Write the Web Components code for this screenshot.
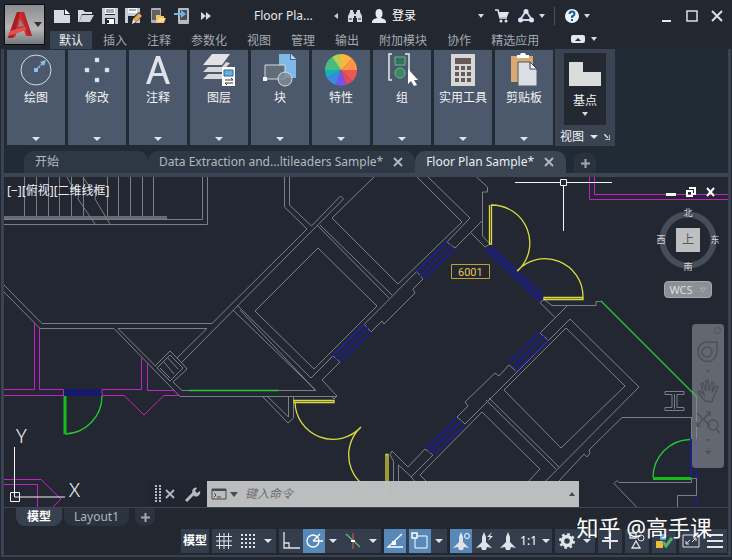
<!DOCTYPE html>
<html lang="zh-CN">
<head>
<meta charset="utf-8">
<title>Floor Plan Sample</title>
<style>
  body { margin: 0; background: #222730; font: 12px/18px "Noto Sans", "Noto Sans CJK SC", sans-serif; color: #d5d9df; }
</style>
</head>
<body>
<cad-app></cad-app>
<script>
const base = `<style>
  *, *::before { box-sizing: border-box; }
  button { font: inherit; color: inherit; background: none; border: 0; padding: 0; margin: 0; display: flex; align-items: center; justify-content: center; white-space: nowrap; }
  svg { display: block; }
</style>`;

function define(name, html, setup) {
  const template = document.createElement('template');
  template.innerHTML = base + html;
  customElements.define(name, class extends HTMLElement {
    connectedCallback() {
      if (this.shadowRoot) return;
      this.attachShadow({ mode: 'open' }).append(template.content.cloneNode(true));
      if (setup) setup(this, this.shadowRoot);
    }
  });
}

const scaleA = '<path d="M9 0l2 5v5l6 6-5-1-1 3H7l-1-3-5 1 6-6V5z" fill="#dfe3e8"/>';
const icons = {
  logo: [24, 28, '<path d="M9 1h7l8 24h-6l-2-6-7 2-2 5H0z" fill="#cf2e2e"/><path d="M9 1h3L8 17l-3 10H0z" fill="#a81c22"/><path d="M12 8l4 7-6 1z" fill="#8d8387"/><path d="M2 20l17-5 2 3-20 7z" fill="#e2504c"/><path d="M16 1l8 24h-4L13 1z" fill="#b8252a"/>'],
  new: [18, 14, '<path d="M1 1h10v5h6v8H1z" fill="#d6dae2"/><path d="M12 0l5 5h-5z" fill="#fff"/>'],
  open: [18, 14, '<path d="M1 13V1h5l2 2h7v2H5L2 13z" fill="#d6dae2"/><path d="M5 6h12l-4 7H2z" fill="#cbd0da"/>'],
  save: [16, 16, '<path d="M0 0h16v16H0z" fill="#c8ccd6"/><path d="M3 0h10v6H3z" fill="#f4f5f7"/><path d="M4 2h8M4 4h8" stroke="#59616f"/><path d="M3 6.500h10" stroke="#222730"/><path d="M3 10h10v6H3z" fill="#222730"/><path d="M5 11h7v5H5z" fill="#fff"/><path d="M5 12h2v3H5z" fill="#222730"/>'],
  saveas: [18, 16, '<path d="M0 0h15v15H0z" fill="#c8ccd6"/><path d="M3 0h9v5H3z" fill="#f4f5f7"/><path d="M4 2h7" stroke="#59616f"/><path d="M3 8h8v7H3z" fill="#222730"/><path d="M6 15l1-5 7-6 4 4-7 6z" fill="#222730"/><path d="M8 11l6-6 3 3-6 6z" fill="#eaa357"/><path d="M8 11l3 3-4 2z" fill="#fff2d5"/>'],
  mobileopen: [16, 16, '<rect x="1" width="10" height="15" rx="1" fill="#a9adb6"/><path d="M2 2h8v10H2z" fill="#60626a"/><path d="M6 15V7h4l1 1h3v2h2l-2 5z" fill="#f2c169"/><path d="M7 14l2-4h6l-2 4z" fill="#ffdd91"/>'],
  mobilesave: [16, 16, '<rect x="4" width="11" height="16" rx="1" fill="#b6bac3"/><path d="M6 2h7v10H6z" fill="#4a4d56"/><path d="M0 5h7V2l5 4-5 4V7H0z" fill="#6fb5ea"/>'],
  more: [10, 8, '<path d="M0 0l5 4-5 4zM5 0l5 4-5 4z" fill="#d6dae2"/>'],
  left: [4, 6, '<path d="M4 0v6L0 3z" fill="#c9cdd6"/>'],
  down: [6, 4, '<path d="M0 0h6L3 4z" fill="#d6dae2"/>'],
  bigdown: [8, 4, '<path d="M0 0h8L4 4z" fill="#dfe4ea"/>'],
  up: [6, 4, '<path d="M0 4h6L3 0z" fill="#4a4b4e"/>'],
  darkdown: [8, 5, '<path d="M0 0h8L4 5z" fill="#4a4b4e"/>'],
  logodown: [8, 5, '<path d="M0 0h8L4 5z" fill="#30323a"/>'],
  binoculars: [14, 14, '<path d="M2 1h3v2h1v6H5v4H0V7l2-4zM9 1h3v2l2 4v6H9V9H8V3h1z" fill="#d6dae2"/><path d="M5 5h4v2H5z" fill="#d6dae2"/><path d="M1 10h3M10 10h3" stroke="#222730"/>'],
  person: [14, 14, '<ellipse cx="7" cy="4.500" rx="3.500" ry="4.500" fill="#e8eaf0"/><path d="M5 7h4v2q5 1 5 4v1H0v-1q0-3 5-4z" fill="#e8eaf0"/>'],
  cart: [15, 14, '<path d="M0 1h3l2 8h7" fill="none" stroke="#e2e5f0" stroke-width="1.500"/><path d="M4 3h10l-2 5H5z" fill="#e2e5f0"/><circle cx="6" cy="12" r="1.500" fill="#e2e5f0"/><circle cx="11" cy="12" r="1.500" fill="#e2e5f0"/>'],
  network: [16, 14, '<path d="M8 2l6 9H2z" fill="none" stroke="#cdd3ef" stroke-width="2"/><circle cx="8" cy="2.500" r="2.500" fill="#dde1f5"/><circle cx="2.500" cy="11" r="2.500" fill="#dde1f5"/><circle cx="13.500" cy="11" r="2.500" fill="#dde1f5"/>'],
  help: [14, 14, '<circle cx="7" cy="7" r="7" fill="#eef3f8"/><path d="M4.500 5q0-2.500 2.500-2.500T9.500 5Q9.500 6.500 7 7.500V9" fill="none" stroke="#1f5c93" stroke-width="2"/><path d="M6 10h2v2H6z" fill="#1f5c93"/>'],
  min: [9, 12, '<path d="M0 10h9v2H0z" fill="#e6e8ec"/>'],
  max: [12, 12, '<path d="M1 1h10v10H1z" fill="none" stroke="#dcdfe5" stroke-width="1.500"/>'],
  close: [12, 12, '<path d="M1 1l10 10M11 1L1 11" stroke="#dcdfe5" stroke-width="2"/>'],
  tabclose: [10, 10, '<path d="M1 1l8 8M9 1L1 9" stroke="#b0b5bd" stroke-width="2"/>'],
  plus: [9, 9, '<path d="M4.500 0v9M0 4.500h9" stroke="#a3a9b2" stroke-width="2"/>'],
  ribbonmode: [14, 8, '<rect width="14" height="8" rx="2" fill="#e4e6ea"/><path d="M4 6l3-3 3 3z" fill="#2a2f39"/>'],
  draw: [32, 32, '<circle cx="16" cy="16" r="15" fill="none" stroke="#d3dbe6"/><path d="M14 14h4v4h-4z" fill="#86c2ee"/><path d="M18 14l6-6" stroke="#86c2ee" stroke-width="1.500" stroke-dasharray="3 1"/><path d="M26 6l-2 6-4-4z" fill="#86c2ee"/>'],
  modify: [32, 32, '<g fill="#e4e7ec" stroke="#a7c4de" stroke-width=".5"><path d="M14 4h4v4h-4zM4 14h4v4H4zM24 14h4v4h-4zM14 24h4v4h-4z"/></g>'],
  annotate: [32, 32, '<path d="M4 30L14 2h4l10 28h-4l-3-8H11l-3 8zM12 19h8L16 7z" fill="#dfe2e6"/>'],
  layers: [34, 34, '<path d="M10 1h18L20 12H1z" fill="#e2e2e2"/><path d="M6 14h14l4-5 4 1-8 9H1zM6 21h14v5H1z" fill="#d5d7d9"/><path d="M20 14h13v19H20z" fill="#fff"/><path d="M22 17h9v6h-9z" fill="#6ab0e4" stroke="#286491"/><path d="M23 27h8m-2-2 2 2M31 30h-8m2 2-2-2" fill="none" stroke="#333"/>'],
  block: [34, 34, '<path d="M16 1h11l6 6v18H16z" fill="#7eb9e7"/><path d="M27 1v6h6z" fill="#36658d"/><path d="M28 1l5 5h-5z" fill="#b8ddf9"/><path d="M2 12h20v14H2z" fill="#606d7b" stroke="#d9dce1"/><circle cx="22" cy="26" r="7" fill="#7f8a96" fill-opacity=".85" stroke="#d9dce1"/><path d="M0 24h4v4H0z" fill="#f4f4f4"/>'],
  properties: [32, 32, '<path d="M16 16V0A16 16 0 0 1 27.300 4.700z" fill="#ffb53d"/><path d="M16 16L27.300 4.700A16 16 0 0 1 32 16z" fill="#ff9347"/><path d="M16 16h16a16 16 0 0 1-4.700 11.300z" fill="#ed5655"/><path d="M16 16l11.300 11.300A16 16 0 0 1 21 31z" fill="#dc4a59"/><path d="M16 16l5 15a16 16 0 0 1-10 0z" fill="#7751ef"/><path d="M16 16l-5 15A16 16 0 0 1 2 24z" fill="#3d89dd"/><path d="M16 16L2 24a16 16 0 0 1-2-8z" fill="#17aebd"/><path d="M16 16H0A16 16 0 0 1 7 3z" fill="#48bc7f"/><path d="M16 16L7 3a16 16 0 0 1 9-3z" fill="#b9cf58"/>'],
  group: [34, 34, '<path d="M7 1H4v26h3M20 1h4v19" fill="none" stroke="#e7eaee" stroke-width="1.500"/><path d="M10 4h10v8H10z" fill="#347158" stroke="#65bd8b"/><circle cx="15" cy="20" r="5" fill="#3f8465" stroke="#65bd8b"/><path d="M23 16v15l3-3 3 5 3-1-3-5h4z" fill="#fff"/>'],
  calc: [32, 32, '<path d="M4 0h24v32H4z" fill="#d8d7d6"/><path d="M8 4h16v6H8zM8 12h4v4H8zm6 0h4v4h-4zm6 0h4v4h-4zM8 18h4v4H8zm6 0h4v4h-4zm6 0h4v4h-4zM8 24h4v4H8zm6 0h4v4h-4zm6 0h4v4h-4z" fill="#655b59"/>'],
  clipboard: [32, 34, '<path d="M3 3h22v26H3z" fill="#d8aa70"/><path d="M9 2h3l1-2h4l1 2h3v3H9z" fill="#fff"/><path d="M10 9h12l7 7v17H10z" fill="#dbdfe4" stroke="#4e596a"/><path d="M22 9v7h7z" fill="#fff" stroke="#2d3c55"/>'],
  base: [32, 24, '<path d="M0 0h14v10h18v14H0z" fill="#dbdbdb"/>'],
  launch: [6, 6, '<path d="M0 0l4 4M6 1v5H1" fill="none" stroke="#d6dae2" stroke-width="1.500"/>'],
  restore: [10, 10, '<path d="M1 4h5v5H1zM3 1h6v6H7" fill="none" stroke="#fff" stroke-width="2"/>'],
  mdimin: [10, 10, '<path d="M0 6h10v3H0z" fill="#fff"/>'],
  mdiclose: [10, 10, '<path d="M1 1l7 8M8 1L1 9" stroke="#fff" stroke-width="2"/>'],
  grip: [6, 18, '<path d="M1 0v18M5 0v18" stroke="#b6bac0" stroke-width="2" stroke-dasharray="2 1"/>'],
  wrench: [16, 16, '<path d="M1 15l8-8" stroke="#b7bbc1" stroke-width="3"/><path d="M8 8q-2-4 1-6 2-1 3 0l-2 3 2 2 3-2q1 3-2 5-2 1-4 0z" fill="#b7bbc1"/>'],
  prompt: [16, 12, '<path d="M1 1h14v10H1z" fill="none" stroke="#48494c"/><path d="M1 2h14" stroke="#48494c" stroke-width="2"/><path d="M3 5l2 2-2 2M6 9h4" fill="none" stroke="#48494c"/>'],
  wheel: [24, 24, '<circle cx="11" cy="12" r="5"/><path d="M2 12a9 9 0 0 1 9-10h10v10a9 9 0 0 1-19 0z"/>', '#4d5158'],
  hand: [22, 24, '<path d="M8 22q-3-3-7-9l2-1 4 4L4 5l2-1 3 8V2l2-1 1 11 3-9 2 1-2 9 4-6 2 1-4 9-2 6z"/>', '#4d5158'],
  zoomer: [24, 24, '<path d="M1 17L14 3M1 4l13 13M10 3h4v4M1 13v4h4"/><circle cx="17" cy="16" r="5"/><path d="M20 20l4 4"/>', '#4d5158'],
  grid: [16, 16, '<path d="M3.500 0v16M8 0v16M12.500 0v16M0 3.500h16M0 8h16M0 12.500h16" stroke="#dfe3e8"/>'],
  dots: [14, 14, '<path d="M0 1h14M0 5h14M0 9h14M0 13h14" stroke="#dfe3e8" stroke-width="2" stroke-dasharray="2 2"/>'],
  ortho: [18, 18, '<path d="M2 0v16h16M2 11h5v5" fill="none" stroke="#dfe3e8" stroke-width="1.300"/>'],
  polar: [18, 18, '<circle cx="8" cy="9" r="6" fill="none" stroke="#fff" stroke-width="1.300"/><path d="M8 9h10M8 9l7-7" stroke="#fff" stroke-width="1.300"/>'],
  iso: [16, 16, '<path d="M1 1l14 13" stroke="#5fb273" stroke-width="1.500"/><path d="M8 0v16" stroke="#d66161"/><path d="M6 8h4" stroke="#fff" stroke-width="2"/>'],
  angle: [18, 16, '<path d="M16 1L2 14h15" fill="none" stroke="#fff" stroke-width="1.300"/><path d="M6 8h4v4H6z" fill="#fff"/>'],
  snap: [18, 18, '<path d="M4 4h12v12H4z" fill="none" stroke="#fff"/><path d="M1 1h5v5H1z" fill="#5788b8" stroke="#fff" stroke-width="1.500"/>'],
  annovis: [18, 18, scaleA + '<circle cx="15" cy="4" r="2.500" fill="none" stroke="#fff"/>'],
  annoauto: [18, 18, scaleA + '<path d="M17 0l-5 5h3l-2 4 5-5h-3z" fill="#dfe3e8"/>'],
  anno: [18, 18, scaleA],
  gear: [16, 16, '<circle cx="8" cy="8" r="4.500" fill="none" stroke="#e2e5e9" stroke-width="3.500"/><circle cx="8" cy="8" r="7" fill="none" stroke="#e2e5e9" stroke-width="2" stroke-dasharray="2.750"/>'],
  bigplus: [16, 16, '<path d="M8 0v16M0 8h16" stroke="#dfe3e8" stroke-width="2"/>'],
  shapes: [16, 18, '<path d="M1 1h6v5H1zM7 9l4 7H3z" fill="none" stroke="#dfe3e8" stroke-width="1.300"/><circle cx="12" cy="6" r="3" fill="none" stroke="#dfe3e8"/>'],
  hardware: [18, 16, '<path d="M5 1h6v6H5z" fill="#59a6d9"/><path d="M1 8h7v7H1z" fill="#edbc3c"/><path d="M8 9l3 4 6-8" fill="none" stroke="#53b16a" stroke-width="3"/>'],
  full: [18, 14, '<path d="M1 1h16v12H1z" fill="none" stroke="#dfe3e8"/><path d="M4 7v3h3M4 10l4-4M14 7V4h-3M14 4l-4 4" fill="none" stroke="#dfe3e8"/>'],
  menu: [16, 14, '<path d="M0 1h16M0 7h16M0 13h16" stroke="#e2e5e9" stroke-width="2"/>']
};

define('cad-icon', `<style>:host { display: block; flex: none; }</style><span></span>`, (el, root) => {
  const [w, h, body, stroke] = icons[el.getAttribute('name')];
  root.querySelector('span').innerHTML = `<svg width="${w}" height="${h}" viewBox="0 0 ${w} ${h}" aria-hidden="true"${stroke ? ` fill="none" stroke="${stroke}" stroke-width="1.500"` : ''}>${body}</svg>`;
});

define('cad-title-bar', `<style>
  :host { display: flex; align-items: center; height: 31px; color: #e6e8ec; }
  .tools { display: flex; }
  .tools button { width: 24px; height: 24px; }
  .title { margin-left: 36px; width: 64px; }
  .arrow { width: 16px; height: 20px; margin-left: 10px; }
  .find { margin-left: 4px; width: 14px; height: 20px; }
  .login { margin-left: 10px; gap: 6px; color: #fff; }
  .push { margin-left: auto; }
  .cart { margin-left: 6px; }
  .net { margin-left: 8px; }
  .flush { margin-left: 0; }
  .help { border-left: 1px solid #4a5160; padding-left: 10px; margin-left: 4px; height: 18px; }
  .window { display: flex; margin-left: 59px; }
  .window button { width: 25px; height: 24px; }
</style>
<div class="tools">
  <button aria-label="新建"><cad-icon name="new"></cad-icon></button>
  <button aria-label="打开"><cad-icon name="open"></cad-icon></button>
  <button aria-label="保存"><cad-icon name="save"></cad-icon></button>
  <button aria-label="另存为"><cad-icon name="saveas"></cad-icon></button>
  <button aria-label="从移动设备打开"><cad-icon name="mobileopen"></cad-icon></button>
  <button aria-label="保存到移动设备"><cad-icon name="mobilesave"></cad-icon></button>
  <button aria-label="更多"><cad-icon name="more"></cad-icon></button>
</div>
<span class="title">Floor Pla...</span>
<button class="arrow" aria-label="收起搜索"><cad-icon name="left"></cad-icon></button>
<button class="find" aria-label="搜索"><cad-icon name="binoculars"></cad-icon></button>
<button class="login"><cad-icon name="person"></cad-icon>登录</button>
<button class="arrow push" aria-label="账户"><cad-icon name="down"></cad-icon></button>
<button class="cart" aria-label="应用商店"><cad-icon name="cart"></cad-icon></button>
<button class="net" aria-label="连接"><cad-icon name="network"></cad-icon></button>
<button class="arrow flush" aria-label="连接选项"><cad-icon name="down"></cad-icon></button>
<button class="help" aria-label="帮助"><cad-icon name="help"></cad-icon></button>
<button class="arrow flush" aria-label="帮助选项"><cad-icon name="down"></cad-icon></button>
<div class="window">
  <button aria-label="最小化"><cad-icon name="min"></cad-icon></button>
  <button aria-label="最大化"><cad-icon name="max"></cad-icon></button>
  <button aria-label="关闭"><cad-icon name="close"></cad-icon></button>
</div>`);

define('cad-menu-tabs', `<style>
  :host { display: flex; gap: 2px; height: 18px; color: #a4a9b2; }
  button { padding: 1px 9px 0; height: 18px; }
  .on { background: #3a4351; color: #f0f2f5; }
  .mode { padding: 0 0 2px; gap: 6px; margin-left: 21px; }
</style>
<button class="on">默认</button><button>插入</button><button>注释</button><button>参数化</button><button>视图</button><button>管理</button><button>输出</button><button>附加模块</button><button>协作</button><button>精选应用</button>
<button class="mode" aria-label="功能区模式"><cad-icon name="ribbonmode"></cad-icon><cad-icon name="down"></cad-icon></button>`);

define('cad-header', `<style>
  :host { display: grid; grid-template-columns: 50px 1fr; padding-right: 3px; background: #222730; }
  .logo { grid-row: span 2; align-self: start; justify-self: start; width: 41px; height: 41px; margin: 4px; border: 1px solid #0c0e12; background: linear-gradient(#8d8d90, #b7b7b9 60%, #77787b); gap: 2px; }
</style>
<button class="logo" aria-label="应用程序菜单"><cad-icon name="logo"></cad-icon><cad-icon name="logodown"></cad-icon></button>
<cad-title-bar></cad-title-bar><cad-menu-tabs></cad-menu-tabs>`);

define('cad-panel', `<style>
  :host { display: block; flex: 0 1 58px; }
  button { width: 100%; height: 95px; padding: 2px 0 4px; background: #4c586b; flex-direction: column; justify-content: flex-start; color: #f1f3f6; }
  .art { display: flex; align-items: center; justify-content: center; height: 36px; margin-bottom: 1px; }
  .foot { margin-top: auto; }
</style>
<button><span class="art"></span><slot></slot><cad-icon class="foot" name="bigdown"></cad-icon></button>`, (el, root) => {
  const art = document.createElement('cad-icon');
  art.setAttribute('name', el.getAttribute('icon'));
  root.querySelector('.art').append(art);
});

define('cad-view-panel', `<style>
  :host { display: flex; flex-direction: column; align-items: center; width: 60px; height: 97px; background: #3a4351; color: #f1f3f6; margin: -1px 0 -1px -1px; }
  .base { width: 42px; height: 72px; margin-top: 4px; background: #242831; flex-direction: column; }
  .base span { margin: 6px 0 2px; }
  .foot { width: 100%; display: flex; padding: 3px 5px 0; align-items: center; justify-content: space-between; }
</style>
<button class="base"><cad-icon name="base"></cad-icon><span>基点</span><cad-icon name="down"></cad-icon></button>
<div class="foot"><span>视图</span><cad-icon name="bigdown"></cad-icon><button aria-label="视图设置"><cad-icon name="launch"></cad-icon></button></div>`);

define('cad-ribbon', `<style>
  :host { display: flex; gap: 3px; padding: 1px 3px 6px; background: #202b36; }
</style>
<cad-panel icon="draw">绘图</cad-panel><cad-panel icon="modify">修改</cad-panel><cad-panel icon="annotate">注释</cad-panel><cad-panel icon="layers">图层</cad-panel><cad-panel icon="block">块</cad-panel><cad-panel icon="properties">特性</cad-panel><cad-panel icon="group">组</cad-panel><cad-panel icon="calc">实用工具</cad-panel><cad-panel icon="clipboard">剪贴板</cad-panel><cad-view-panel></cad-view-panel>`);

define('cad-file-tab', `<style>
  :host { display: flex; align-items: center; gap: 10px; height: 22px; padding: 0 12px 0 11px; background: #2d3844; border-radius: 10px 10px 0 0; color: #b4b9c1; }
  :host([active]) { background: #3b4553; color: #eceef1; }
  :host([wide]) { width: 124px; }
  :host([wide]) .x { display: none; }
</style><button><slot></slot></button><button class="x" aria-label="关闭标签"><cad-icon name="tabclose"></cad-icon></button>`);

define('cad-file-tabs', `<style>
  :host { display: flex; padding-left: 20px; height: 26px; background: #202b36; border-bottom: 4px solid #3b4553; }
  .add { width: 22px; height: 20px; align-self: end; margin-left: 8px; background: #2a323d; border-radius: 8px 8px 0 0; }
</style>
<cad-file-tab wide>开始</cad-file-tab><cad-file-tab>Data Extraction and...ltileaders Sample*</cad-file-tab><cad-file-tab active>Floor Plan Sample*</cad-file-tab>
<button class="add" aria-label="新图形"><cad-icon name="plus"></cad-icon></button>`);

define('cad-floor-plan', `<style>
  :host { display: block; position: absolute; inset: 0; overflow: hidden; }
  svg { width: 100%; height: 100%; fill: none; }
  text { stroke: none; }
</style>
<svg viewBox="4 177 724 331" preserveAspectRatio="xMinYMin slice">
  <g stroke="#7b8088">
    <path d="M24.500 177v39M36.500 177v39M48.500 177v39M59.500 177v39M71.500 177v39M83.500 177v39M107.500 177v39M118.500 177v39M130.500 177v39M142.500 177v39M153.500 177v39M83.500 208v8"/>
    <path d="M4 217.500H167" stroke-width="3" stroke="#666b74"/>
    <path d="M4 219.500H202.500V177M4 224.500H207.500V177M67 177l7 13 5 0-1 9 17 25M83 177l8 12 5 2-1 8 15 25"/>
    <path d="M4 285l38 38.500H212L307 229 284.500 207V177M4 292l36 36.500H114L180 396.500H336M118 328.500H207L177 358M118 328.500l38 38"/>
    <path d="M289.500 177v28l22 21 29-30 3 3L182 362M155 366l15-15 7 7 5 5 5 6-14 13 9 8.500H316L233 310"/>
    <path d="M157 368l13-13 13 13-13 13zM160 368l10 10M164 362l10 12M168 358l10 11"/>
    <path d="M316 391l-76-81M237 305l74 73 22-22 7 6-18 18 15 16-3 3-3-3"/>
    <path d="M318 248l-63 63 59 58 63-63zM317 225l72 73M320 225l72 70"/>
    <path d="M311 378L447 241M364 324l7 8 11-11 2 3 31-31-2-4 10-10-6-7"/>
    <path d="M374 177l-42 41 66 66 64-62-45-45M428 177l42 41-23 24 8 6 27-27M470 232l15 15 5-3-7.500-8V192h5v-5l-11-10"/>
    <path d="M262 396l26 27 5.500-5v-22M267 396l21.500 21v-21"/>
    <path d="M601 301.500h-5v4H552l-8-6-4 3 15 15M567 306l-27 27 8 7M570 319L465 424l-8-7 11-11-3-4 30-29 4 3 10-11 7 6M570 319l69 68L519 508M566 328l-62 62 57 58 64-62z"/>
    <path d="M489 398l70 69M486 400l70 69M504 508l36-39-58-57-62 63 33 33M691.500 417V440M691 417.500H622L589 450l1 3-3 4-3-3-50 54M696.500 396v43M691 478.500h5.500v17H677.500V508M691.500 478v4.500H619l-2-2-3 3 24 25"/>
    <path d="M390 455l2-4 16 16 17-18 8 6-22 22 29 31M390 455l3.500 6v47M398.500 508V465l13 12M388 495.500h-16l-5 5 11 8"/>
    <path d="M665 391.500h19v3h-7v13h7v3h-19v-3h7v-13h-7zM674.500 394v15"/>
  </g>
  <g stroke="#1c1f86" stroke-width="2">
    <path d="M447 241l-30 31M451 245l-31 31M455 249l-32 30M364 324l-32 32M371 332l-31 30M368 327l-33 33M540 332l-31 31M544 336l-31 31M548 340l-32 31M457 418l-31 30M461 421l-32 31M465 425l-32 30M486 250l54 52M489 248l53 52M491 246l54 51M691 439v39M696.500 439v39M696.500 496v12"/>
    <path d="M64 392.500H102" stroke-width="7" stroke="#171a6c"/>
  </g>
  <g stroke="#c322c6">
    <path d="M589.500 177v22.500H728M594.500 177v17.500H728M34.500 322v67.500H4M39.500 328v61.500H63.500v6M4 395.500H64M102 395.500v-6H141.500V358M147.500 363v27.500H174M102 395.500h22l20 19.500 20-19.500h16M4 479.500H41l20 19.500-9 9M4 484.500H37.500V508"/>
  </g>
  <g stroke="#25c936">
    <path d="M189 390.500h89M601 301l96 96M102 396a38 38 0 0 1-37 38M690 439.500a38 38 0 0 0-37 38" stroke-width="1.300"/>
    <path d="M65 396v38M653 478.500h38" stroke-width="3" stroke="#15bd15"/>
  </g>
  <g stroke="#dada43">
    <path d="M489.500 205v39h2v-39a38 38 0 0 1 26 66M517 271a38 38 0 0 1 66 26M544 299.500h39v-2h-39zM294 400.500h40v2h-40zM295 402a38 38 0 0 0 66 25M361 427a38 38 0 0 0 26 66M386 454.500v39h2v-39z" stroke-width="1.300"/>
    <path d="M451.500 264.500h38v14h-38z" stroke="#c4a02f"/>
    <text x="458" y="276" fill="#e9c654" font-family="Liberation Sans Narrow, Roboto, sans-serif" font-size="11">6001</text>
  </g>
  <g stroke="#f4f5f7" fill="none">
    <path d="M515 182.500h45M567 182.500h45M563.500 186v45M560.500 179.500h6v6h-6z"/>
    <path d="M14.500 447v50H65M10.500 492.500h9v9h-9z"/>
    <g fill="#f4f5f7" font-family="Noto Sans, sans-serif" font-weight="300" font-size="20"><text x="16" y="443">Y</text><text x="69" y="497">X</text></g>
  </g>
</svg>`);

define('cad-view-cube', `<style>
  :host { display: grid; justify-items: center; gap: 8px; width: 64px; font-size: 9px; line-height: 12px; color: #d7d9dd; }
  .ring { display: grid; grid-template: 12px 1fr 12px / 12px 1fr 12px; place-items: center; width: 66px; height: 66px; background: radial-gradient(circle, transparent 22px, #474d58 23px, #474d58 28px, transparent 29px); }
  .ring span:first-child, .s { grid-column: 1 / -1; }
  .top { width: 24px; height: 24px; background: #bdbfc1; color: #55585c; font-size: 12px; }
  .wcs { width: 48px; height: 17px; border-radius: 4px; border: 1px solid #a4a8ad; background: #8b9096; color: #dcdee1; font-size: 11px; gap: 6px; }
</style>
<div class="ring"><span>北</span><span>西</span><button class="top">上</button><span>东</span><span class="s">南</span></div>
<button class="wcs">WCS <svg width="8" height="6" fill="none" stroke="#a9adb2"><path d="M1 1h6L4 5z"/></svg></button>`);

define('cad-nav-bar', `<style>
  :host { display: flex; flex-direction: column; align-items: center; width: 32px; height: 144px; padding: 3px 0; gap: 6px; border-radius: 4px; background: rgba(135,139,145,.65); }
  .c { align-self: end; margin-right: 3px; }
</style>
<svg class="c" width="7" height="7" fill="none" stroke="#4d5158"><circle cx="3.500" cy="3.500" r="3"/></svg>
<button aria-label="导航轮"><cad-icon name="wheel"></cad-icon></button>
<svg width="4" height="3"><path d="M0 0h4L2 3z" fill="#4d5158"/></svg>
<button aria-label="平移"><cad-icon name="hand"></cad-icon></button>
<button aria-label="缩放"><cad-icon name="zoomer"></cad-icon></button>
<svg width="4" height="3"><path d="M0 0h4L2 3z" fill="#4d5158"/></svg>
<svg width="5" height="6"><path d="M0 0h5M0 3h5L2 6z" stroke="#4d5158" fill="#4d5158"/></svg>`);

define('cad-command-line', `<style>
  :host { display: flex; align-items: center; height: 26px; background: rgba(32,38,47,.85); padding-left: 5px; gap: 4px; }
  .x { width: 10px; }
  .tool { width: 20px; height: 20px; margin-left: 4px; }
  .bar { flex: 1; display: flex; align-items: center; align-self: stretch; gap: 4px; padding: 0 4px; background: rgba(214,214,214,.86); }
  .recent { gap: 3px; }
  input { flex: 1; min-width: 0; border: 0; padding: 0; margin-left: 3px; background: none; font: inherit; font-style: italic; outline: 0; }
  input::placeholder { color: #6b6c6e; opacity: 1; }
</style>
<cad-icon name="grip"></cad-icon>
<button class="x" aria-label="关闭命令行"><cad-icon name="tabclose"></cad-icon></button>
<button class="tool" aria-label="自定义"><cad-icon name="wrench"></cad-icon></button>
<div class="bar"><button class="recent" aria-label="最近使用的命令"><cad-icon name="prompt"></cad-icon><cad-icon name="darkdown"></cad-icon></button>
<input aria-label="命令" placeholder="键入命令"><button aria-label="历史记录"><cad-icon name="up"></cad-icon></button></div>`);

define('cad-viewport', `<style>
  :host { display: block; position: relative; flex: 1; min-height: 240px; background: #222731; border-bottom: 1px solid #3e4550; }
  .labels { position: absolute; left: 3px; top: 5px; display: flex; color: #eef0f3; }
  .mdi { position: absolute; right: 12px; top: 10px; display: flex; gap: 10px; }
  cad-view-cube { position: absolute; right: 9px; top: 30px; }
  cad-nav-bar { position: absolute; right: 4px; top: 147px; }
  cad-command-line { position: absolute; left: 146px; right: 149px; bottom: 0; }
</style>
<cad-floor-plan></cad-floor-plan>
<div class="labels"><button>[−]</button><button>[俯视]</button><button>[二维线框]</button></div>
<div class="mdi"><button aria-label="最小化图形"><cad-icon name="mdimin"></cad-icon></button><button aria-label="还原图形"><cad-icon name="restore"></cad-icon></button><button aria-label="关闭图形"><cad-icon name="mdiclose"></cad-icon></button></div>
<cad-view-cube></cad-view-cube><cad-nav-bar></cad-nav-bar><cad-command-line></cad-command-line>`);

define('cad-layout-tabs', `<style>
  :host { display: flex; gap: 2px; padding-left: 12px; height: 19px; color: #b0b5bd; }
  button { height: 18px; padding: 0 10px; background: #2b333e; border-radius: 0 0 9px 9px; }
  .on { background: #38424f; color: #fff; font-weight: 700; padding: 0 11px; }
  .add { padding: 0; width: 20px; margin-left: 4px; }
</style><button class="on">模型</button><button>Layout1</button><button class="add" aria-label="新建布局"><cad-icon name="plus"></cad-icon></button>`);

define('cad-status-button', `<style>
  :host { display: block; width: 24px; }
  :host([on]) { width: 22px; background: #5788b8; }
  :host([arrow]) { width: 16px; }
  :host([text]) { width: auto; color: #fff; }
  button { width: 100%; height: 24px; gap: 5px; }
</style><button><slot></slot></button>`, (el, root) => {
  if (el.getAttribute('label')) root.querySelector('button').setAttribute('aria-label', el.getAttribute('label'));
});

const sb = (icon, label, flag = '') => `<cad-status-button label="${label}" ${flag}><cad-icon name="${icon}"></cad-icon></cad-status-button>`;
const sa = label => sb('bigdown', label, 'arrow');
define('cad-status-bar', `<style>
  :host { display: flex; gap: 3px; justify-content: flex-end; padding: 2px 1px; height: 28px; }
  .g { display: flex; align-items: center; background: #343d4b; height: 24px; }
  .m { padding: 0 2px; font-weight: 700; }
  .scale { padding-right: 2px; }
</style>
<div class="g m"><cad-status-button text>模型</cad-status-button></div>
<div class="g">${sb('grid', '栅格')}${sb('dots', '捕捉')}${sa('捕捉设置')}</div>
<div class="g">${sb('ortho', '正交')}${sb('polar', '极轴追踪', 'on')}${sa('极轴设置')}${sb('iso', '等轴测')}${sa('等轴测设置')}</div>
<div class="g">${sb('angle', '对象捕捉追踪', 'on')}&nbsp;${sb('snap', '对象捕捉', 'on')}${sa('对象捕捉设置')}</div>
<div class="g scale">${sb('annovis', '注释可见性', 'on')}${sb('annoauto', '自动缩放')}${sb('anno', '注释比例')}<cad-status-button text>1:1<cad-icon name="bigdown"></cad-icon></cad-status-button></div>
<div class="g">${sb('gear', '切换工作空间')}${sa('工作空间')}</div>
<div class="g">${sb('bigplus', '注释监视器')}</div>
<div class="g">${sb('shapes', '隔离对象')}</div>
<div class="g">${sb('hardware', '硬件加速')}</div>
<div class="g">${sb('full', '全屏显示')}${sb('menu', '自定义')}</div>`);

define('cad-app', `<style>
  :host { display: flex; flex-direction: column; min-height: 100vh; position: relative; }
  main { flex: 1; display: flex; flex-direction: column; margin: 0 1px 3px; border: solid #3a4352; border-width: 0 3px 2px; }
  .mark { position: absolute; right: 20px; bottom: 17px; font-size: 22px; line-height: 32px; color: #fff; pointer-events: none; }
</style>
<cad-header></cad-header>
<main><cad-ribbon></cad-ribbon><cad-file-tabs></cad-file-tabs><cad-viewport></cad-viewport><cad-layout-tabs></cad-layout-tabs><cad-status-bar></cad-status-bar></main>
<div class="mark">知乎 @高手课</div>`);
</script>
</body>
</html>
